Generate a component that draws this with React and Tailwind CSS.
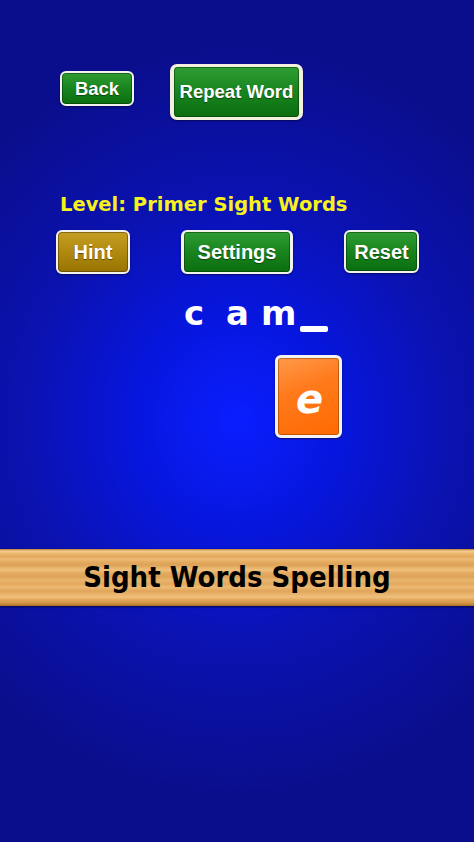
import React from "react";

function GreenButton({ children, className = "" }) {
  return (
    <div
      className={`flex items-center justify-center rounded-[6px] border-2 border-[#f2f2ee] bg-[linear-gradient(180deg,#2f9d33_0%,#1a8620_45%,#0b6e0f_100%)] shadow-[inset_0_0_0_1px_rgba(0,40,0,0.45),0_1px_2px_rgba(0,0,40,0.6)] text-white font-bold [font-family:'Liberation_Sans',Arial,sans-serif] [text-shadow:0_1px_1px_rgba(0,0,0,0.45)] ${className}`}
    >
      {children}
    </div>
  );
}

export default function App() {
  return (
    <div className="min-h-screen w-full overflow-hidden bg-[radial-gradient(ellipse_75%_45%_at_50%_50%,#0a1eff_0%,#0716dc_30%,#0b12b0_60%,#0a0e8c_100%)] flex flex-col">
      {/* Row 1 */}
      <div className="flex items-start pl-[60px] pt-[64px] gap-[36px]">
        <GreenButton className="mt-[7px] w-[74px] h-[35px] text-[18.5px]">Back</GreenButton>
        <GreenButton className="w-[133px] h-[56px] text-[18.5px] border-[3px] border-x-[4px] border-[#f3f1dd] rounded-[7px]">
          Repeat Word
        </GreenButton>
      </div>

      {/* Level text */}
      <div className="mt-[75px] pl-[60px] h-[20px] leading-none text-[19.5px] font-bold text-[#f7f11c] [font-family:'DejaVu_Sans',sans-serif] whitespace-nowrap">
        Level: Primer Sight Words
      </div>

      {/* Row 2 */}
      <div className="mt-[15px] flex pl-[56px] gap-[51px]">
        <div className="flex items-center justify-center w-[74px] h-[44px] rounded-[6px] border-2 border-[#f2f2ee] bg-[linear-gradient(180deg,#c59e22_0%,#b08a10_50%,#977300_100%)] shadow-[inset_0_0_0_1px_rgba(60,40,0,0.45),0_1px_2px_rgba(0,0,40,0.6)] text-white font-bold text-[20px] [font-family:'Liberation_Sans',Arial,sans-serif] [text-shadow:0_1px_1px_rgba(0,0,0,0.45)]">
          Hint
        </div>
        <GreenButton className="w-[112px] h-[44px] text-[20px] border-x-[3px]">Settings</GreenButton>
        <GreenButton className="w-[75px] h-[43px] text-[20px]">Reset</GreenButton>
      </div>

      {/* Word */}
      <div className="mt-[22px] pl-[184px] flex items-end h-[36px] text-white font-bold text-[34px] leading-none [font-family:'DejaVu_Sans',sans-serif]">
        <span className="w-[42px] pb-[2px]">c</span>
        <span className="w-[35px] pb-[2px]">a</span>
        <span className="w-[39px] pb-[2px] tracking-[-2px]">m</span>
        <span className="w-[28px] h-[6px] rounded-[2px] bg-white"></span>
      </div>

      {/* Tile */}
      <div className="mt-[23px] pl-[275px] flex">
        <div className="w-[67px] h-[83px] rounded-[6px] border-[3px] border-[#f4f4f0] bg-[linear-gradient(160deg,#ff9a4a_0%,#ff7a1c_40%,#ff6a00_100%)] shadow-[inset_0_0_0_1px_rgba(120,50,0,0.45),0_1px_2px_rgba(0,0,40,0.6)] flex items-center justify-center">
          <span className="mt-[4px] ml-[2px] text-white font-bold italic text-[40px] leading-none [font-family:'DejaVu_Sans',sans-serif]">
            e
          </span>
        </div>
      </div>

      {/* Wood bar */}
      <div className="mt-[111px] h-[57px] w-full flex items-center justify-center bg-[linear-gradient(180deg,#b8782c_0px,#f4cd90_2px,#eab56c_5px,#e2a95c_8px,#eebc78_10px,#e4ab60_13px,#dca258_16px,#e8b46c_19px,#f0c07c_21px,#e4aa60_24px,#dda458_28px,#e9b66e_31px,#e2a95e_35px,#eeba74_38px,#e0a65a_42px,#e8b26a_45px,#f0c07c_48px,#e0a55a_51px,#d39646_54px,#a86e26_57px)] shadow-[0_1px_2px_rgba(0,0,40,0.7)]">
        <span className="text-black font-bold text-[29px] leading-none [font-family:'DejaVu_Sans_Condensed','DejaVu_Sans',sans-serif] whitespace-nowrap">
          Sight Words Spelling
        </span>
      </div>
    </div>
  );
}
